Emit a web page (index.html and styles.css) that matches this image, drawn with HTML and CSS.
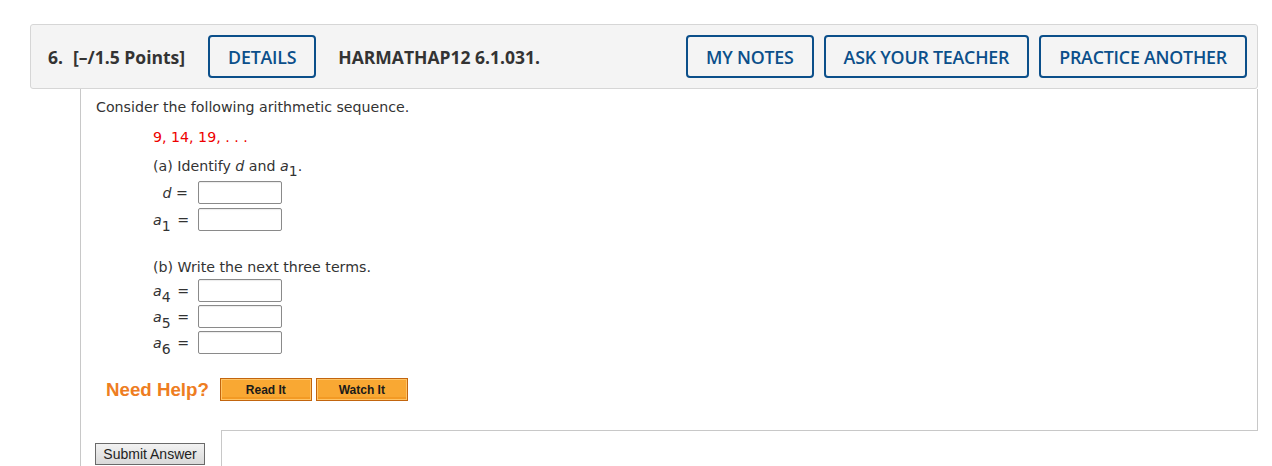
FILE: index.html
```html
<!DOCTYPE html>
<html>
<head>
<meta charset="utf-8">
<link rel="stylesheet" href="styles.css">
</head>
<body>
<div class="page">
  <div class="qhead">
    <span class="qnum">6.</span>
    <span class="qpts">[–/1.5 Points]</span>
    <button class="hbtn details">DETAILS</button>
    <span class="qcode">HARMATHAP12 6.1.031.</span>
    <span class="spacer"></span>
    <button class="hbtn">MY NOTES</button>
    <button class="hbtn">ASK YOUR TEACHER</button>
    <button class="hbtn">PRACTICE ANOTHER</button>
  </div>
  <div class="qbody">
    <div class="qupper">
      <p class="intro">Consider the following arithmetic sequence.</p>
      <div class="indent">
        <p class="seq">9, 14, 19, . . .</p>
        <p class="part">(a) Identify <i>d</i> and <i>a</i><sub class="sub-inline">1</sub>.</p>
        <div class="rows rows-a">
          <div class="row"><span class="lbl"><i>d</i> =</span><span class="inp"></span></div>
          <div class="row"><span class="lbl"><i>a</i><sub class="sub">1</sub> =</span><span class="inp"></span></div>
        </div>
        <p class="part part-b">(b) Write the next three terms.</p>
        <div class="rows rows-b">
          <div class="row"><span class="lbl"><i>a</i><sub class="sub">4</sub> =</span><span class="inp"></span></div>
          <div class="row"><span class="lbl"><i>a</i><sub class="sub">5</sub> =</span><span class="inp"></span></div>
          <div class="row"><span class="lbl"><i>a</i><sub class="sub">6</sub> =</span><span class="inp"></span></div>
        </div>
      </div>
      <div class="help">
        <span class="needhelp">Need Help?</span>
        <button class="obtn read">Read It</button>
        <button class="obtn">Watch It</button>
      </div>
    </div>
    <div class="qfoot">
      <button class="submit">Submit Answer</button>
      <div class="fbox"></div>
    </div>
  </div>
</div>
</body>
</html>
```

FILE: styles.css
```css
html, body {
  margin: 0;
  padding: 0;
  background: #ffffff;
  overflow: hidden;
}
.page {
  padding: 24px 14px 0 30px;
  height: 442px;
  overflow: hidden;
}
.qhead {
  display: flex;
  align-items: center;
  background: #f4f4f4;
  border: 1px solid #d6d6d6;
  border-radius: 3px;
  height: 65px;
  box-sizing: border-box;
  padding: 0 10px 0 17px;
  font-family: "Open Sans", sans-serif;
  font-weight: 700;
  font-size: 17.5px;
  color: #333333;
}
.qnum {
  margin-right: 10px;
}
.qpts {
  margin-right: 23px;
}
.qcode {
  margin-left: 22px;
}
.spacer {
  flex: 1;
}
.hbtn {
  font-family: "Open Sans", sans-serif;
  font-weight: 600;
  font-size: 17.8px;
  color: #0b4f8a;
  background: #f4f4f4;
  border: 2px solid #0b4f8a;
  border-radius: 4px;
  height: 43px;
  padding: 0 18px;
  margin-left: 10px;
  letter-spacing: -0.2px;
}
.hbtn.details {
  margin-left: 0;
}
.qbody {
  margin-left: 50px;
  border-left: 1px solid #c8c8c8;
  font-family: "DejaVu Sans", Verdana, sans-serif;
  font-size: 14.2px;
  color: #333333;
}
.qupper {
  border-right: 1px solid #c8c8c8;
  padding: 9px 0 0 15px;
  height: 341px;
  box-sizing: border-box;
}
p {
  margin: 0;
  line-height: 18px;
}
.indent {
  padding-left: 57px;
}
.seq {
  color: #ee0000;
  margin-top: 12px;
}
.part {
  margin-top: 11px;
}
.part-b {
  margin-top: 27px;
}
.sub-inline {
  font-size: 14px;
  vertical-align: -5px;
  line-height: 0;
}
.rows-a {
  margin-top: 6px;
}
.rows-b {
  margin-top: 3px;
}
.row {
  display: flex;
  align-items: center;
  height: 23px;
  margin-bottom: 3px;
}
.rows-a .row {
  margin-bottom: 4px;
}
.lbl {
  width: 35px;
  text-align: right;
  margin-right: 10px;
  white-space: nowrap;
  line-height: 18px;
}
.sub {
  font-size: 14px;
  vertical-align: -6px;
  line-height: 0;
  margin-right: 2px;
}
.inp {
  width: 84px;
  height: 23px;
  box-sizing: border-box;
  border: 1px solid #8a8a8a;
  border-radius: 2px;
  background: #ffffff;
  box-shadow: inset 0 1px 1px rgba(0,0,0,0.08);
}
.help {
  display: flex;
  align-items: center;
  margin-top: 24px;
  margin-left: 10px;
  height: 23px;
}
.needhelp {
  font-family: "Liberation Sans", Arial, sans-serif;
  font-weight: 700;
  font-size: 18.7px;
  color: #ee7d22;
  margin-right: 11px;
}
.obtn {
  width: 92px;
  height: 23px;
  box-sizing: border-box;
  border: 1px solid #c2650e;
  background: #f9a833;
  box-shadow: inset 0 0 0 1px #ffc466, inset 0 -2px 0 1px #f39a24;
  font-family: "Liberation Sans", Arial, sans-serif;
  font-weight: 700;
  font-size: 12px;
  color: #1a1a1a;
  padding: 0;
  margin-right: 4px;
}
.qfoot {
  display: flex;
  align-items: flex-start;
  height: 80px;
}
.submit {
  margin: 13px 16px 0 14px;
  width: 110px;
  height: 22px;
  box-sizing: border-box;
  border: 1px solid #6a6a6a;
  background: linear-gradient(#f2f2f2, #d9d9d9);
  font-family: "Liberation Sans", Arial, sans-serif;
  font-size: 14px;
  color: #222222;
  padding: 0;
}
.fbox {
  flex: 1;
  height: 80px;
  border-top: 1px solid #c8c8c8;
  border-left: 1px solid #c8c8c8;
}
```
